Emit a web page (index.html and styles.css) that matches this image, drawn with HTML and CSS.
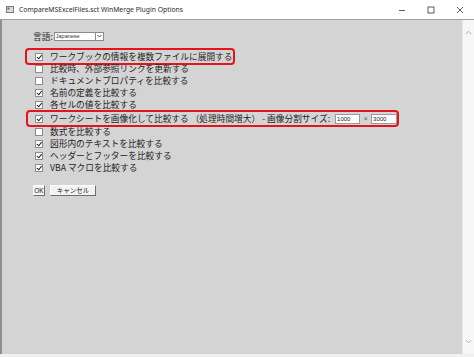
FILE: index.html
```html
<!DOCTYPE html>
<html lang="ja">
<head>
<meta charset="utf-8">
<title>CompareMSExcelFiles.sct WinMerge Plugin Options</title>
<link rel="stylesheet" href="styles.css">
</head>
<body>
<div class="window">
  <div class="titlebar">
    <svg class="app-icon" width="8" height="7" viewBox="0 0 8 7"><rect x="0.5" y="0.5" width="7" height="6" fill="#d6dde8" stroke="#7a7a7a"/><rect x="1.5" y="1.5" width="2" height="2" fill="#5a6f8f"/></svg>
    <span class="title">CompareMSExcelFiles.sct WinMerge Plugin Options</span>
    <div class="controls">
      <span class="ctrl"><svg width="8" height="8" viewBox="0 0 8 8"><line x1="1" y1="4.5" x2="7" y2="4.5" stroke="#333" stroke-width="0.8"/></svg></span>
      <span class="ctrl"><svg width="8" height="8" viewBox="0 0 8 8"><rect x="1" y="1" width="6" height="6" fill="none" stroke="#333" stroke-width="0.8"/></svg></span>
      <span class="ctrl"><svg width="8" height="8" viewBox="0 0 8 8"><path d="M1 1L7 7M7 1L1 7" stroke="#333" stroke-width="0.8"/></svg></span>
    </div>
  </div>
  <div class="client">
    <div class="leftedge"></div>
    <div class="content">
      <div class="lang">
        <span class="lang-label">言語:</span>
        <span class="select"><span class="select-text">Japanese</span><span class="select-arrow"><svg width="5" height="4" viewBox="0 0 5 4"><path d="M0.5 1L2.5 3L4.5 1" fill="none" stroke="#222" stroke-width="0.8"/></svg></span></span>
      </div>
      <div class="options">
        <label class="opt mark1"><span class="cb on"></span>ワークブックの情報を複数ファイルに展開する</label>
        <label class="opt"><span class="cb"></span>比較時、外部参照リンクを更新する</label>
        <label class="opt"><span class="cb"></span>ドキュメントプロパティを比較する</label>
        <label class="opt"><span class="cb on"></span>名前の定義を比較する</label>
        <label class="opt"><span class="cb on"></span>各セルの値を比較する</label>
        <label class="opt tall mark2"><span class="cb on"></span>ワークシートを画像化して比較する （処理時間増大） - 画像分割サイズ:<input class="num first" type="text" value="1000"><span class="times">×</span><input class="num" type="text" value="3000"></label>
        <label class="opt"><span class="cb"></span>数式を比較する</label>
        <label class="opt"><span class="cb on"></span>図形内のテキストを比較する</label>
        <label class="opt"><span class="cb on"></span>ヘッダーとフッターを比較する</label>
        <label class="opt"><span class="cb on"></span>VBA マクロを比較する</label>
      </div>
      <div class="buttons">
        <button class="btn ok" type="button">OK</button>
        <button class="btn cancel" type="button">キャンセル</button>
      </div>
    </div>
    <div class="scrollbar">
      <svg width="7" height="5" viewBox="0 0 7 5"><path d="M0.8 4L3.5 1.2L6.2 4" fill="none" stroke="#a6a6a6" stroke-width="0.9"/></svg>
      <svg width="7" height="5" viewBox="0 0 7 5"><path d="M0.8 1L3.5 3.8L6.2 1" fill="none" stroke="#a6a6a6" stroke-width="0.9"/></svg>
    </div>
  </div>
  <div class="bottom"></div>
</div>
</body>
</html>
```
FILE: styles.css
```css
html, body {
  margin: 0;
  padding: 0;
}
body {
  width: 474px;
  height: 357px;
  overflow: hidden;
  background: #ffffff;
  font-family: "Noto Sans CJK JP", "Noto Sans", sans-serif;
  color: #1e1e1e;
}
.window {
  display: flex;
  flex-direction: column;
  height: 357px;
}
.titlebar {
  height: 19px;
  display: flex;
  align-items: center;
  background: #ffffff;
  border-bottom: 1px solid #9e9e9e;
}
.app-icon {
  margin-left: 6px;
  display: block;
}
.title {
  margin-left: 5px;
  font-family: "Noto Sans", sans-serif;
  font-size: 6.8px;
  color: #2a2a2a;
  white-space: nowrap;
}
.controls {
  margin-left: auto;
  display: flex;
}
.ctrl {
  width: 29px;
  height: 19px;
  display: flex;
  align-items: center;
  justify-content: center;
}
.client {
  flex: 1;
  display: flex;
  background: #d4d4d4;
}
.leftedge {
  width: 2px;
  background: #8d8d8d;
}
.content {
  flex: 1;
  padding: 11px 0 0 31px;
  display: flex;
  flex-direction: column;
  align-items: flex-start;
}
.lang {
  height: 10px;
  display: flex;
  align-items: center;
}
.lang-label {
  font-size: 8.7px;
  margin-right: 1px;
  white-space: nowrap;
}
.select {
  display: flex;
  align-items: stretch;
  width: 50px;
  height: 9px;
  box-sizing: border-box;
  background: #ffffff;
  border: 1px solid #8a8a8a;
}
.select-text {
  flex: 1;
  font-family: "Liberation Sans", sans-serif;
  font-size: 5.5px;
  line-height: 7px;
  padding-left: 1px;
  color: #333;
}
.select-arrow {
  width: 7px;
  border-left: 1px solid #8a8a8a;
  display: flex;
  align-items: center;
  justify-content: center;
}
.options {
  margin-top: 10px;
  display: flex;
  flex-direction: column;
  align-items: flex-start;
}
.opt {
  position: relative;
  display: flex;
  align-items: center;
  height: 12px;
  padding-left: 2px;
  font-size: 8.7px;
  line-height: 12px;
  white-space: nowrap;
  color: #1e1e1e;
}
.opt.tall {
  height: 15px;
}
.cb {
  width: 8px;
  height: 8px;
  box-sizing: border-box;
  margin-right: 7px;
  background: #ffffff;
  border: 1px solid #8c8c8c;
  flex: none;
  position: relative;
}
.cb.on::after {
  content: "";
  position: absolute;
  left: 1.5px;
  top: 0.3px;
  width: 2px;
  height: 3.5px;
  border: solid #222;
  border-width: 0 1.1px 1.1px 0;
  transform: rotate(40deg);
}
.mark1::after,
.mark2::after {
  content: "";
  position: absolute;
  border: 2.5px solid #e3141c;
  border-radius: 4px;
  pointer-events: none;
}
.mark1::after {
  left: -8px;
  right: -3px;
  top: -3px;
  bottom: -2px;
}
.mark2::after {
  left: -7px;
  right: -2px;
  top: -1px;
  bottom: -1px;
}
.num {
  width: 25px;
  height: 10px;
  box-sizing: border-box;
  margin: 0 0 0 2px;
  padding: 0 0 0 1px;
  border: 1px solid #9a9a9a;
  background: #ffffff;
  font-family: "Liberation Sans", sans-serif;
  font-size: 6px;
  color: #222;
  outline: none;
}
.num.first {
  margin-left: 5px;
}
.times {
  width: 11px;
  text-align: center;
  font-family: "Liberation Sans", sans-serif;
  font-size: 6.5px;
  color: #555;
}
.times + .num {
  margin-left: 0;
  width: 26px;
}
.buttons {
  margin-top: 11px;
  display: flex;
  gap: 5px;
}
.btn {
  height: 11px;
  box-sizing: border-box;
  padding: 0;
  margin: 0;
  background: #f3f3f3;
  border: 1px solid;
  border-color: #ffffff #6e6e6e #6e6e6e #ffffff;
  font-family: "Noto Sans CJK JP", "Noto Sans", sans-serif;
  font-size: 6.5px;
  line-height: 9px;
  color: #222;
}
.btn.ok {
  width: 12px;
  font-family: "Liberation Sans", sans-serif;
}
.btn.cancel {
  width: 46px;
}
.scrollbar {
  width: 11px;
  background: #f7f7f7;
  border-left: 1px solid #e4e4e4;
  display: flex;
  flex-direction: column;
  justify-content: space-between;
  align-items: center;
  padding: 10px 0 10px;
}
.bottom {
  height: 3px;
  background: #f0f0f0;
}
```
